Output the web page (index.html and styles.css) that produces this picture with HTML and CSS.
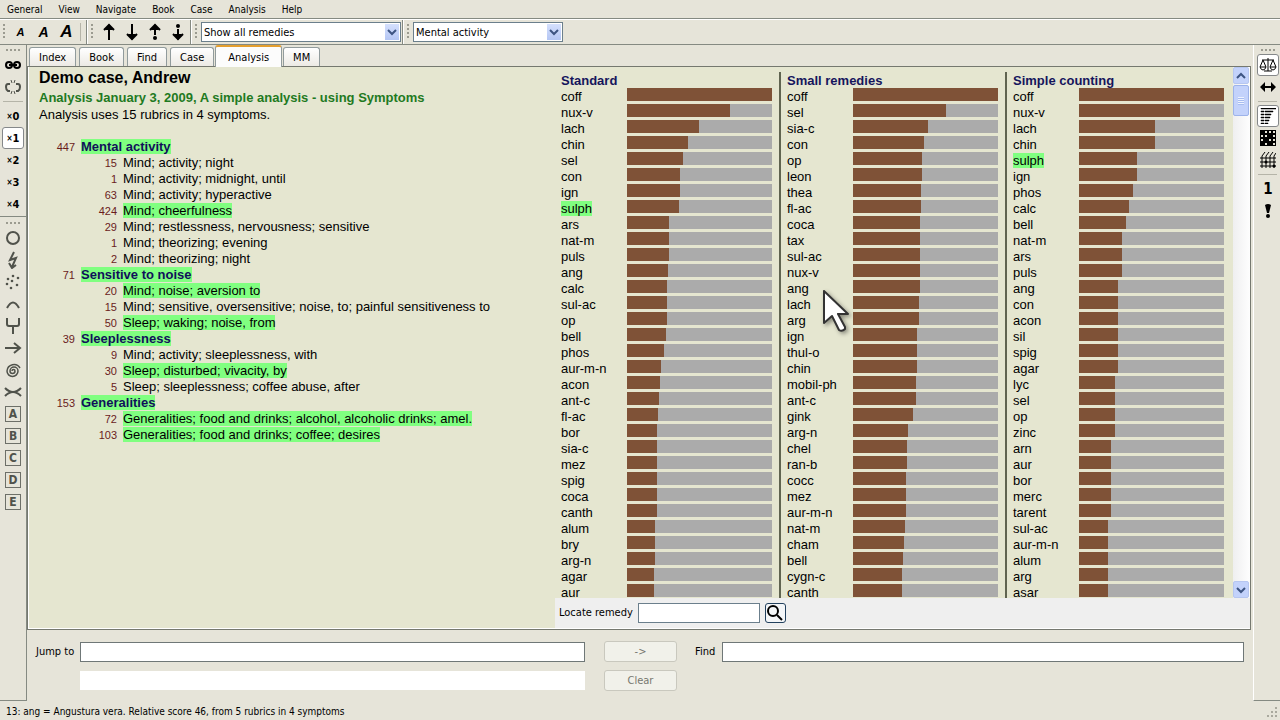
FILE: index.html
```html
<!DOCTYPE html>
<html lang="en">
<head>
    <meta charset="UTF-8">
    <meta name="viewport" content="width=device-width, initial-scale=1.0">
    <title>Demo case, Andrew</title>
    <link rel="stylesheet" href="styles.css">
</head>
<body>
    <div class="app">
        <nav class="menubar">
            <a href="#">General</a>
            <a href="#">View</a>
            <a href="#">Navigate</a>
            <a href="#">Book</a>
            <a href="#">Case</a>
            <a href="#">Analysis</a>
            <a href="#">Help</a>
        </nav>

        <div class="toolbar">
            <div class="tool-group">
                <span class="grip"></span>
                <button class="tool font-small" aria-label="Small text">A</button>
                <button class="tool font-medium" aria-label="Medium text">A</button>
                <button class="tool font-large" aria-label="Large text">A</button>
                <span class="tool-sep"></span>
            </div>
            <div class="tool-group">
                <span class="grip"></span>
                <button class="tool" aria-label="Up"><svg width="12" height="18" viewBox="0 0 12 18"><path d="M6 17V3M1 7L6 2L11 7" class="bold"/><path d="M6 1L2 7H10Z"/></svg></button>
                <button class="tool" aria-label="Down"><svg width="12" height="18" viewBox="0 0 12 18"><path d="M6 1V15M1 11L6 16L11 11" class="bold"/><path d="M6 17L2 11H10Z"/></svg></button>
                <button class="tool" aria-label="Previous"><svg width="12" height="18" viewBox="0 0 12 18"><path d="M6 12V3M1 7L6 2L11 7" class="bold"/><path d="M6 1L2 7H10Z"/><circle cx="6" cy="15" r="2"/></svg></button>
                <button class="tool" aria-label="Next"><svg width="12" height="18" viewBox="0 0 12 18"><path d="M6 6V15M1 11L6 16L11 11" class="bold"/><path d="M6 17L2 11H10Z"/><circle cx="6" cy="3" r="2"/></svg></button>
            </div>
            <div class="tool-group">
                <span class="grip"></span>
                <span class="combo combo-wide">
                    <select aria-label="Remedies"><option>Show all remedies</option></select>
                    <svg class="combo-arrow" width="14" height="16" viewBox="0 0 14 16"><path d="M3 6L7 10L11 6"/></svg>
                </span>
            </div>
            <div class="tool-group tool-group-last">
                <span class="grip"></span>
                <span class="combo">
                    <select aria-label="Symptom"><option>Mental activity</option></select>
                    <svg class="combo-arrow" width="14" height="16" viewBox="0 0 14 16"><path d="M3 6L7 10L11 6"/></svg>
                </span>
            </div>
        </div>

        <div class="workspace">
            <aside class="sidebar sidebar-left">
                <div class="side-group">
                    <span class="grip-h"></span>
                    <button class="side" aria-label="Link"><svg width="18" height="10" viewBox="0 0 18 10"><rect x="2" y="2" width="6" height="6" rx="3" class="bold"/><rect x="10" y="2" width="6" height="6" rx="3" class="bold"/><path d="M5 5H13" class="bold"/></svg></button>
                    <button class="side gray" aria-label="Unlink"><svg width="18" height="14" viewBox="0 0 18 14"><path d="M6 4H4Q2 4 2 7T4 11H6M12 4H14Q16 4 16 7T14 11H12" class="line"/><path d="M8 3L7 0M10 3L11 0M8 11L7 14M10 11L11 14" class="thin"/></svg></button>
                    <span class="side-sep"></span>
                    <button class="side"><small>×</small>0</button>
                    <button class="side selected"><small>×</small>1</button>
                    <button class="side"><small>×</small>2</button>
                    <button class="side"><small>×</small>3</button>
                    <button class="side"><small>×</small>4</button>
                </div>
                <div class="side-group side-group-last">
                    <span class="grip-h"></span>
                    <button class="side gray" aria-label="Circle"><svg width="16" height="16" viewBox="0 0 16 16"><circle cx="8" cy="8" r="6" class="line"/></svg></button>
                    <button class="side gray" aria-label="Lightning"><svg width="16" height="18" viewBox="0 0 16 18"><path d="M9 1L5 9L11 7L7 16M4 12L7 17L11 14" class="line"/></svg></button>
                    <button class="side gray" aria-label="Dots"><svg width="16" height="16" viewBox="0 0 16 16"><circle cx="8" cy="2" r="1.3"/><circle cx="3" cy="5" r="1.3"/><circle cx="13" cy="4" r="1.3"/><circle cx="7" cy="7" r="1.3"/><circle cx="2" cy="10" r="1.3"/><circle cx="12" cy="11" r="1.3"/><circle cx="6" cy="14" r="1.3"/></svg></button>
                    <button class="side gray" aria-label="Arc"><svg width="16" height="16" viewBox="0 0 16 16"><path d="M2 12Q8 1 14 12" class="line"/></svg></button>
                    <button class="side gray" aria-label="Fork"><svg width="16" height="18" viewBox="0 0 16 18"><path d="M2 1V7Q2 9 4 9H12Q14 9 14 7V1M8 9V17" class="line"/></svg></button>
                    <button class="side gray" aria-label="Arrow"><svg width="18" height="16" viewBox="0 0 18 16"><path d="M1 8H16M10 3L16 8L10 13" class="line"/></svg></button>
                    <button class="side gray" aria-label="Spiral"><svg width="18" height="16" viewBox="0 0 18 16"><path d="M8 9A1.5 1.5 0 0 1 11 9A2.5 2.5 0 0 1 6 9A4 4 0 0 1 14 9A5.5 5.5 0 0 1 3 9A7 7 0 0 1 16 6" class="spiral"/></svg></button>
                    <button class="side gray" aria-label="Cross"><svg width="18" height="12" viewBox="0 0 18 12"><path d="M1 2Q5 6 9 6T17 10M1 10Q5 6 9 6T17 2" class="line"/></svg></button>
                    <button class="side"><b class="letter">A</b></button>
                    <button class="side"><b class="letter">B</b></button>
                    <button class="side"><b class="letter">C</b></button>
                    <button class="side"><b class="letter">D</b></button>
                    <button class="side"><b class="letter">E</b></button>
                </div>
            </aside>

            <main class="center">
                <div class="tabs">
                    <button class="tab">Index</button>
                    <button class="tab">Book</button>
                    <button class="tab">Find</button>
                    <button class="tab">Case</button>
                    <button class="tab active">Analysis</button>
                    <button class="tab">MM</button>
                </div>

                <div class="panel">
                    <section class="case">
                        <h1>Demo case, Andrew</h1>
                        <h2>Analysis January 3, 2009, A simple analysis - using Symptoms</h2>
                        <p>Analysis uses 15 rubrics in 4 symptoms.</p>
                        <ul class="symptoms" id="symptoms"></ul>
                    </section>

                    <section class="results">
                        <div class="scores">
                            <div class="score-columns" id="scoreColumns"></div>
                            <div class="scrollbar">
                                <button class="scroll-btn" aria-label="Scroll up"><svg width="12" height="12" viewBox="0 0 12 12"><path d="M2 8L6 4L10 8"/></svg></button>
                                <div class="scroll-thumb"></div>
                                <button class="scroll-btn scroll-down" aria-label="Scroll down"><svg width="12" height="12" viewBox="0 0 12 12"><path d="M2 4L6 8L10 4"/></svg></button>
                            </div>
                        </div>
                        <form class="locate">
                            <label for="locate">Locate remedy</label>
                            <input type="text" id="locate">
                            <button type="button" aria-label="Locate"><svg width="18" height="18" viewBox="0 0 18 18"><circle cx="7" cy="7" r="5"/><path d="M11 11L16 16"/></svg></button>
                        </form>
                    </section>
                </div>

                <form class="jump">
                    <label for="jump">Jump to</label>
                    <input type="text" id="jump">
                    <button type="button" disabled>-&gt;</button>
                    <label for="find">Find</label>
                    <input type="text" id="find">
                    <output class="jump-result"></output>
                    <button type="button" disabled>Clear</button>
                </form>
            </main>

            <aside class="sidebar sidebar-right">
                <span class="grip-h"></span>
                <button class="side selected" aria-label="Balance"><svg width="18" height="16" viewBox="0 0 18 16"><path d="M9 1V14M5 14H13M3 3H15M4 3L1 10M4 3L7 10M14 3L11 10M14 3L17 10" class="thin"/><path d="M1 10H7Q6 13 4 13T1 10ZM11 10H17Q16 13 14 13T11 10Z" class="thin"/></svg></button>
                <button class="side" aria-label="Width"><svg width="16" height="10" viewBox="0 0 16 10"><path d="M2 5H14" class="bold"/><path d="M0 5L5 0V10ZM16 5L11 0V10Z"/></svg></button>
                <span class="side-sep"></span>
                <button class="side selected" aria-label="Bars"><svg width="16" height="16" viewBox="0 0 16 16"><path d="M1 0H16V1H1ZM1 3H4V4H1ZM5 3H13V4H5ZM1 6H4V7H1ZM5 6H11V7H5ZM1 9H4V10H1ZM5 9H10V10H5ZM1 12H4V13H1ZM5 12H9V13H5ZM1 15H4V16H1ZM5 15H8V16H5Z" class="rows"/></svg></button>
                <button class="side" aria-label="Grid"><svg width="16" height="16" viewBox="0 0 16 16"><path d="M0 0H16V16H0Z"/><path d="M5 1H7V3H5ZM13 1H15V3H13ZM1 5H3V7H1ZM5 5H7V7H5ZM9 1H11V3H9ZM13 5H15V7H13ZM1 9H3V11H1ZM9 9H11V11H9ZM5 13H7V15H5ZM13 13H15V15H13ZM13 9H15V11H13Z" class="paper"/></svg></button>
                <button class="side" aria-label="Lattice"><svg width="16" height="16" viewBox="0 0 16 16"><path d="M0 6H16M0 10H16M0 14H16M2 4V16M6 4V16M10 4V16M14 4V16M2 4L5 0M6 4L9 0M10 4L13 0M14 4L16 1" class="thin"/><circle cx="6" cy="10" r="1.5"/><circle cx="14" cy="14" r="1.5"/></svg></button>
                <span class="side-sep"></span>
                <button class="side big">1</button>
                <button class="side" aria-label="Important"><svg width="8" height="16" viewBox="0 0 8 16"><path d="M1 2Q4 0 7 2L5 10H3Z"/><circle cx="4" cy="13" r="2"/></svg></button>
            </aside>
        </div>

        <footer class="status">
            <span>13: ang = Angustura vera. Relative score 46, from 5 rubrics in 4 symptoms</span>
            <svg width="12" height="12" viewBox="0 0 12 12"><path d="M9 1h2v2h-2zM9 5h2v2h-2zM5 5h2v2h-2zM9 9h2v2h-2zM5 9h2v2h-2zM1 9h2v2h-2z"/></svg>
        </footer>

        <svg class="pointer" width="30" height="46" viewBox="0 0 30 46"><path d="M2 2V34L10 27L17 41Q20 43 23 40V38L16 25H26Z"/></svg>
    </div>

    <script src="app.js"></script>
</body>
</html>
```

FILE: styles.css
```css
:root {
    --chrome: #e6e4d9;
    --paper: #e5e6d0;
    --line: #858a82;
    --field-border: #6b7f8c;
    --highlight: #80ff80;
    --bar: #7f5237;
    --bar-rest: #ababab;
    --ui-font: 'DejaVu Sans Condensed', 'Noto Sans', sans-serif;
}

* {
    box-sizing: border-box;
}

body {
    margin: 0;
    font-family: var(--ui-font);
    font-size: 11px;
    color: #000;
    background-color: var(--chrome);
}

button, input, select {
    font: inherit;
    color: inherit;
    margin: 0;
    padding: 0;
}

svg {
    display: block;
    fill: currentColor;
}

.app {
    display: flex;
    flex-direction: column;
    height: 100vh;
    position: relative;
}

/* Menu and toolbar */
.menubar {
    display: flex;
    gap: 16px;
    padding: 0 7px;
    height: 19px;
    line-height: 19px;
    font-size: 10px;
    border-bottom: 1px solid var(--line);
}

.menubar a {
    color: inherit;
    text-decoration: none;
}

.toolbar {
    display: flex;
    height: 26px;
    border-top: 1px solid #fff;
    border-bottom: 1px solid var(--line);
}

.tool-group {
    display: flex;
    align-items: center;
    padding: 0 1px 0 3px;
    border-right: 1px solid var(--line);
}

.tool-group + .tool-group {
    border-left: 1px solid #fff;
}

.tool-group-last {
    border-right: 0;
}

.grip {
    width: 2px;
    height: 16px;
    margin-right: 4px;
    background: repeating-linear-gradient(#9b9b90 0 2px, transparent 2px 4px);
}

.tool {
    width: 23px;
    height: 22px;
    display: grid;
    place-items: center;
    border: 0;
    background: none;
    font-family: 'Liberation Sans', Arial, sans-serif;
    font-weight: bold;
    font-style: italic;
}

.font-small { font-size: 11px; }
.font-medium { font-size: 14px; }
.font-large { font-size: 17px; }

.tool-sep {
    width: 1px;
    height: 18px;
    margin: 0 4px 0 2px;
    background: #b5b4a8;
}

.bold, .line, .thin, .spiral {
    fill: none;
    stroke: currentColor;
    stroke-width: 2;
}

.thin {
    stroke-width: 1;
}

.spiral {
    stroke-width: 1.5;
}

.rows {
    stroke: currentColor;
    stroke-width: 0.5;
}

.paper {
    fill: var(--chrome);
}

.combo {
    position: relative;
    width: 150px;
}

.combo-wide {
    width: 200px;
}

.combo select {
    appearance: none;
    width: 100%;
    height: 20px;
    padding: 0 18px 0 2px;
    border: 1px solid var(--field-border);
    border-radius: 0;
    background: #fff;
}

.combo-arrow {
    position: absolute;
    right: 2px;
    top: 2px;
    background: linear-gradient(#d5e0fd, #b4c6f4);
    pointer-events: none;
}

.combo-arrow path, .scroll-btn path {
    fill: none;
    stroke: #3d5482;
    stroke-width: 2;
}

/* Side toolbars */
.workspace {
    flex: 1;
    min-height: 0;
    display: flex;
}

.sidebar {
    display: flex;
    flex-direction: column;
}

.sidebar-left {
    width: 27px;
    border-right: 1px solid var(--line);
    border-bottom: 1px solid var(--line);
}

.sidebar-right {
    width: 27px;
    padding-left: 1px;
    border-left: 1px solid #fff;
    border-bottom: 1px solid var(--line);
}

.side-group {
    padding-bottom: 1px;
    border-bottom: 1px solid var(--line);
}

.side-group-last {
    padding-top: 1px;
    border-bottom: 0;
}

.grip-h {
    display: block;
    width: 14px;
    height: 2px;
    margin: 4px auto 3px;
    background: repeating-linear-gradient(90deg, #9b9b90 0 2px, transparent 2px 4px);
}

.side {
    display: flex;
    align-items: center;
    justify-content: center;
    width: 22px;
    height: 22px;
    margin: 0 2px;
    border: 1px solid transparent;
    background: none;
    font-weight: bold;
}

.side small {
    font-size: 8px;
}

.side svg {
    flex: none;
}

.side.selected {
    background: #fff;
    border-color: #85888a;
    border-radius: 3px;
}

.gray {
    color: #50524b;
}

.big {
    font-size: 15px;
}

.letter {
    width: 16px;
    height: 16px;
    border: 1px solid #6d6f68;
    font-size: 12px;
    line-height: 14px;
    color: #50524b;
}

.side-sep {
    display: block;
    height: 1px;
    margin: 3px;
    background: #b5b4a8;
}

/* Tabs */
.center {
    flex: 1;
    min-width: 0;
    display: flex;
    flex-direction: column;
    padding-right: 2px;
}

.tabs {
    display: flex;
    align-items: flex-end;
    gap: 3px;
    height: 21px;
    padding-left: 2px;
}

.tab {
    height: 19px;
    padding: 0 9px;
    border: 1px solid #919b9c;
    border-bottom: 0;
    border-radius: 3px 3px 0 0;
    background: linear-gradient(#fff, #eceae4);
}

.tab.active {
    height: 22px;
    margin: 0 -2px -1px;
    padding: 0 12px;
    border-top: 2px solid #e59f2f;
    background: #fcfcfc;
    z-index: 1;
}

/* Analysis panel */
.panel {
    flex: 1;
    min-height: 0;
    display: grid;
    grid-template-columns: 527fr 695fr;
    padding-bottom: 1px;
    border: 1px solid #75786f;
    background: var(--paper);
    box-shadow: inset 1px -1px #fff;
    font-family: 'Liberation Sans', Arial, sans-serif;
    font-size: 13px;
    line-height: 16px;
}

.case {
    padding-left: 11px;
}

.case h1 {
    margin: 0;
    font-size: 16px;
    line-height: 22px;
}

.case h2 {
    margin: 0;
    font-size: 13px;
    line-height: 18px;
    color: #1f7a1f;
}

.case p {
    margin: 0 0 16px;
}

.symptoms, .rubrics, .remedies {
    list-style: none;
    margin: 0;
    padding: 0;
}

.entry {
    display: grid;
    grid-template-columns: 36px 1fr;
    column-gap: 6px;
}

.rubrics .entry {
    grid-template-columns: 78px 1fr;
}

.count {
    text-align: right;
    font-size: 11px;
    color: #6a1c1c;
}

.symptom-name {
    color: #10105a;
}

.marked {
    background: var(--highlight);
}

/* Remedy scores */
.results {
    min-height: 0;
    display: flex;
    flex-direction: column;
}

.scores {
    flex: 1;
    min-height: 0;
    display: flex;
}

.score-columns {
    flex: 1;
    display: grid;
    grid-template-columns: repeat(3, 1fr);
    padding-top: 5px;
    overflow: hidden;
}

.score-column {
    padding: 0 7px 0 6px;
    border-right: 2px solid #606450;
}

.score-column:last-child {
    border-color: transparent;
}

.score-column h3 {
    margin: 0;
    height: 16px;
    font-size: 13px;
    line-height: 18px;
    color: #15155c;
}

.remedy {
    display: grid;
    grid-template-columns: 66px 1fr;
    height: 16px;
    line-height: 18px;
}

.track {
    height: 13px;
    background: var(--bar-rest);
}

.fill {
    height: 100%;
    background: var(--bar);
}

.scrollbar {
    width: 17px;
    display: flex;
    flex-direction: column;
    gap: 1px;
    padding-right: 1px;
    background: linear-gradient(90deg, #efeff0, #fefefe);
}

.scroll-btn {
    display: grid;
    place-items: center;
    height: 17px;
    border: 1px solid #b6c6f0;
    border-radius: 2px;
    background: #c3d2fb;
}

.scroll-thumb {
    height: 31px;
    border: 1px solid #9db3ea;
    border-radius: 2px;
    background: repeating-linear-gradient(#eef3ff 0 1px, #a8bdf0 1px 2px) center / 6px 8px no-repeat #c3d2fb;
}

.scroll-down {
    margin-top: auto;
}

.locate {
    display: flex;
    align-items: center;
    gap: 5px;
    height: 30px;
    padding-left: 4px;
    background: #efefef;
    font-family: var(--ui-font);
    font-size: 11px;
}

.locate input {
    width: 122px;
    height: 20px;
    border: 1px solid var(--field-border);
}

.locate button {
    display: grid;
    place-items: center;
    width: 21px;
    height: 20px;
    border: 1px solid #23415e;
    border-radius: 3px;
    background: #f4f6f8;
}

.locate circle, .locate path {
    fill: none;
    stroke: #000;
    stroke-width: 2;
}

/* Jump and find fields */
.jump {
    display: grid;
    grid-template-columns: 44px 505fr 19px 73px 18px 27px 522fr;
    grid-template-rows: 21px 21px;
    row-gap: 8px;
    align-items: center;
    padding: 11px 7px 10px 9px;
    white-space: nowrap;
}

.jump input {
    width: 100%;
    height: 20px;
    border: 1px solid #6f7777;
}

.jump button {
    grid-column: 4;
    height: 21px;
    border: 1px solid #c9c8be;
    border-radius: 3px;
    background: #f1f1ea;
    color: #77776f;
}

.jump label[for="find"] {
    grid-column: 6;
}

.jump-result {
    grid-column: 2;
    height: 19px;
    background: #fff;
}

/* Status line */
.status {
    display: flex;
    justify-content: space-between;
    align-items: center;
    height: 19px;
    padding: 2px 2px 0 6px;
    font-size: 10px;
}

.status svg {
    color: #aaa99e;
}

.pointer {
    position: absolute;
    left: 822px;
    top: 289px;
    fill: #fff;
    stroke: #333;
    stroke-width: 2;
    stroke-linejoin: round;
    filter: drop-shadow(2px 2px 2px rgba(0, 0, 0, 0.4));
}
```

FILE: app.js
```js
const symptoms = [
    { count: 447, name: 'Mental activity', rubrics: [
        [15, 'Mind; activity; night'],
        [1, 'Mind; activity; midnight, until'],
        [63, 'Mind; activity; hyperactive'],
        [424, 'Mind; cheerfulness', true],
        [29, 'Mind; restlessness, nervousness; sensitive'],
        [1, 'Mind; theorizing; evening'],
        [2, 'Mind; theorizing; night'],
    ] },
    { count: 71, name: 'Sensitive to noise', rubrics: [
        [20, 'Mind; noise; aversion to', true],
        [15, 'Mind; sensitive, oversensitive; noise, to; painful sensitiveness to'],
        [50, 'Sleep; waking; noise, from', true],
    ] },
    { count: 39, name: 'Sleeplessness', rubrics: [
        [9, 'Mind; activity; sleeplessness, with'],
        [30, 'Sleep; disturbed; vivacity, by', true],
        [5, 'Sleep; sleeplessness; coffee abuse, after'],
    ] },
    { count: 153, name: 'Generalities', rubrics: [
        [72, 'Generalities; food and drinks; alcohol, alcoholic drinks; amel.', true],
        [103, 'Generalities; food and drinks; coffee; desires', true],
    ] },
];

// Remedy name and score, the first remedy has the highest score
const columns = [
    { title: 'Standard', marked: 'sulph', scores: 'coff 145,nux-v 103,lach 72,chin 61,sel 56,con 53,ign 53,sulph 52,ars 42,nat-m 42,puls 42,ang 41,calc 40,sul-ac 40,op 40,bell 39,phos 37,aur-m-n 34,acon 33,ant-c 32,fl-ac 31,bor 30,sia-c 30,mez 30,spig 30,coca 30,canth 30,alum 28,bry 28,arg-n 28,agar 27,aur 27' },
    { title: 'Small remedies', scores: 'coff 145,sel 93,sia-c 75,con 71,op 69,leon 69,thea 68,fl-ac 68,coca 67,tax 67,sul-ac 67,nux-v 67,ang 67,lach 66,arg 66,ign 64,thul-o 64,chin 64,mobil-ph 63,ant-c 63,gink 60,arg-n 55,chel 54,ran-b 54,cocc 53,mez 53,aur-m-n 53,nat-m 52,cham 51,bell 50,cygn-c 49,canth 49' },
    { title: 'Simple counting', marked: 'sulph', scores: 'coff 145,nux-v 101,lach 76,chin 76,sulph 58,ign 58,phos 54,calc 50,bell 47,nat-m 43,ars 43,puls 43,ang 39,con 39,acon 39,sil 39,spig 39,agar 39,lyc 36,sel 36,op 36,zinc 36,arn 32,aur 32,bor 32,merc 32,tarent 32,sul-ac 29,aur-m-n 29,alum 29,arg 29,asar 29' },
];

function showSymptoms() {
    document.getElementById('symptoms').innerHTML = symptoms.map(symptom => `
        <li>
            <div class="entry">
                <span class="count">${symptom.count}</span>
                <span><b class="symptom-name marked">${symptom.name}</b></span>
            </div>
            <ul class="rubrics">
                ${symptom.rubrics.map(([count, text, marked]) => `
                    <li class="entry">
                        <span class="count">${count}</span>
                        <span><span class="${marked ? 'marked' : ''}">${text}</span></span>
                    </li>
                `).join('')}
            </ul>
        </li>
    `).join('');
}

function showScores() {
    document.getElementById('scoreColumns').innerHTML = columns.map(column => {
        const rows = column.scores.split(',').map(item => item.split(' '));
        const max = Number(rows[0][1]);

        return `
            <div class="score-column">
                <h3>${column.title}</h3>
                <ol class="remedies">
                    ${rows.map(([name, score]) => `
                        <li class="remedy">
                            <span><span class="${name === column.marked ? 'marked' : ''}">${name}</span></span>
                            <div class="track"><div class="fill" style="width: ${score / max * 100}%"></div></div>
                        </li>
                    `).join('')}
                </ol>
            </div>
        `;
    }).join('');
}

showSymptoms();
showScores();
```
